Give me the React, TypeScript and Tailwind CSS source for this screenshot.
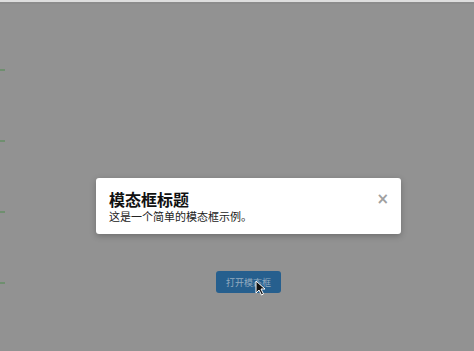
import React from 'react';

export default function App() {
  const font = { fontFamily: '"Noto Sans CJK SC", "Noto Sans", sans-serif' };
  return (
    <div className="relative h-[351px] w-full overflow-hidden bg-[#929292]" style={font}>
      <div className="h-[2px] bg-[#dedede]" />
      <div className="h-[2px] bg-[#8c8c8c]" />

      {/* faded markers on the left edge of the page behind */}
      <div className="absolute left-0 top-0 flex h-full flex-col pt-[69px] gap-[69px]">
        <div className="h-[2px] w-[5px] bg-[#6f8f6f]" />
        <div className="h-[2px] w-[5px] bg-[#6f8f6f]" />
        <div className="h-[2px] w-[5px] bg-[#6f8f6f]" />
        <div className="h-[2px] w-[5px] bg-[#6f8f6f]" />
      </div>

      {/* page button under the backdrop */}
      <div className="flex justify-center pt-[267px] pl-[23px]">
        <button className="relative h-[22px] w-[65px] rounded-[3px] bg-[#265f8e] text-[9px] leading-none text-[#93abbf]">
          打开模态框
          <svg className="absolute left-[39px] top-[9px]" width="12" height="16" viewBox="0 0 12 16">
            <path d="M1 1 L1 13 L4 10 L6.5 15 L8.5 14 L6 9 L10 9 Z" fill="#111" stroke="#fff" strokeWidth="1" />
          </svg>
        </button>
      </div>

      {/* modal */}
      <div className="absolute left-[96px] top-[178px] flex h-[56px] w-[305px] items-start justify-between rounded-[3px] bg-white pl-[13px] pr-[12px] pt-[12px] shadow-[0_2px_6px_rgba(0,0,0,0.25)]">
        <div className="flex flex-col gap-[1px]">
          <div className="text-[16px] font-bold leading-[19px] text-[#111]">模态框标题</div>
          <div className="text-[11px] leading-[13px] text-[#222]">这是一个简单的模态框示例。</div>
        </div>
        <div className="mt-[2px] text-[15px] font-bold leading-none text-[#a0a0a0]" style={{ fontFamily: '"DejaVu Sans", sans-serif' }}>×</div>
      </div>
    </div>
  );
}
